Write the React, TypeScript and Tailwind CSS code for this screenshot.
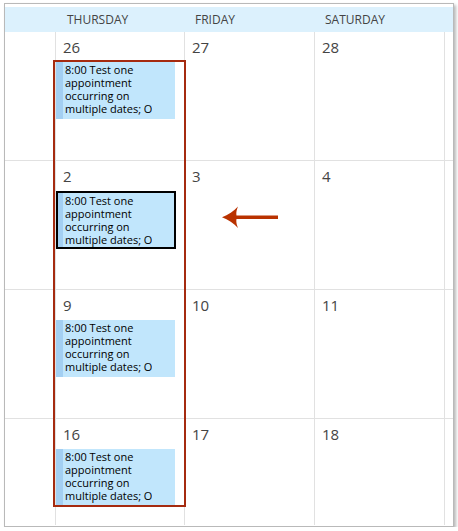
const font = { fontFamily: '"Open Sans", "Noto Sans", sans-serif' };

type Week = {
  days: [string, string, string];
  selected?: boolean;
};

const weeks: Week[] = [
  { days: ["26", "27", "28"] },
  { days: ["2", "3", "4"], selected: true },
  { days: ["9", "10", "11"] },
  { days: ["16", "17", "18"] },
];

const subject = "8:00 Test one\nappointment\noccurring on\nmultiple dates; O";

function Appointment({ selected }: { selected?: boolean }) {
  return (
    <div
      className={
        selected
          ? "mt-[5px] flex h-[58px] w-[120px] border-2 border-black bg-[#c1e6fc]"
          : "mt-[5px] flex h-[57px] w-[119px] bg-[#c1e6fc]"
      }
    >
      <div className={selected ? "w-[5px] bg-[#a3cff2]" : "w-[7px] bg-[#a3cff2]"} />
      <div className="overflow-hidden whitespace-pre pl-[2px] pt-[1px] text-[11px] leading-[13px] text-black">
        {subject}
      </div>
    </div>
  );
}

export default function App() {
  return (
    <div className="bg-white pl-1 pt-[3px]" style={font}>
      <div className="relative h-[524px] w-[450px] border border-[#b9b9b9] bg-white shadow-[2px_2px_3px_rgba(0,0,0,0.28)]">
        <div className="pt-[3px]">
          <div className="flex h-[25px] items-center bg-[#dcf1fd] text-[12px] text-[#444]">
            <div className="w-[50px]" />
            <div className="w-[129px] pl-[12px]">THURSDAY</div>
            <div className="w-[130px] pl-[11px]">FRIDAY</div>
            <div className="w-[130px] pl-[11px]">SATURDAY</div>
            <div className="flex-1" />
          </div>
        </div>

        {weeks.map((week, i) => (
          <div
            key={i}
            className={
              i < 3
                ? "flex h-[129px] border-b border-[#e1e1e1]"
                : "flex h-[106px]"
            }
          >
            <div className="w-[50px]" />
            {week.days.map((day, j) => (
              <div
                key={day}
                className={
                  j === 0
                    ? "w-[129px] border-l border-[#e1e1e1] pt-[5px]"
                    : "w-[130px] border-l border-[#e1e1e1] pt-[5px]"
                }
              >
                <div className="pl-[7px] text-[15px] leading-[20px] text-[#444]">
                  {day}
                </div>
                {j === 0 && <Appointment selected={week.selected} />}
              </div>
            ))}
            <div className="flex-1 border-l border-[#e1e1e1]" />
          </div>
        ))}

        <div className="absolute left-[48px] top-[56px] h-[447px] w-[133px] border-2 border-[#a52b10]" />

        <svg
          className="absolute left-[216px] top-[201px]"
          width="58"
          height="25"
          viewBox="0 0 58 25"
        >
          <path
            d="M1 12.3 C7 10 13 6 17 1.5 C15.5 5 15 8 15.5 10.5 L57 10.5 L57 14 L15.5 14 C15 16.5 15.5 19.5 17 23 C13 18.5 7 14.5 1 12.3 Z"
            fill="#b93200"
          />
        </svg>
      </div>
    </div>
  );
}
